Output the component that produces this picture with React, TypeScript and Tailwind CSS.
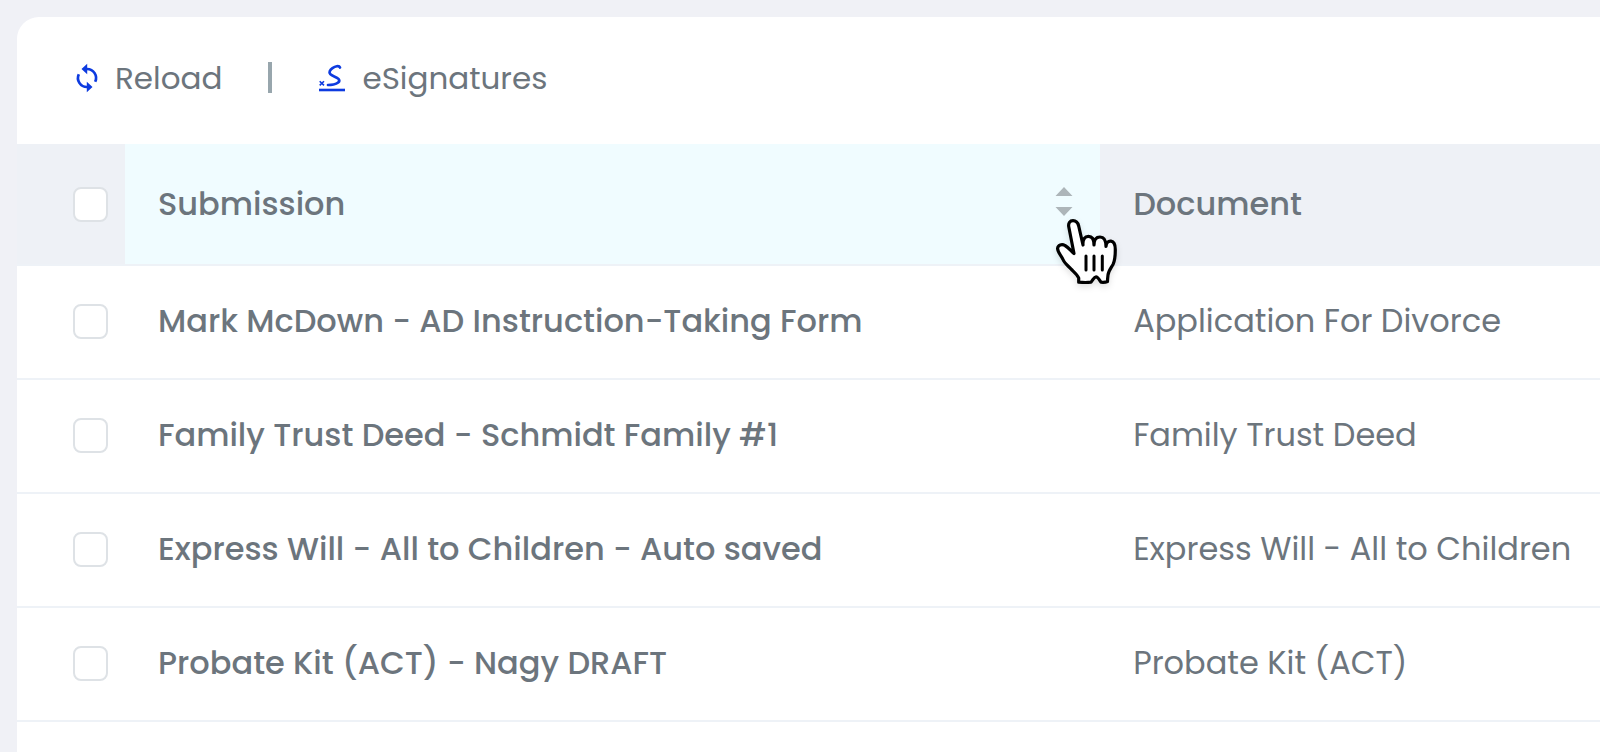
import React, { useState } from 'react';

const submissions = [
  { name: 'Mark McDown - AD Instruction-Taking Form', document: 'Application For Divorce' },
  { name: 'Family Trust Deed - Schmidt Family #1', document: 'Family Trust Deed' },
  { name: 'Express Will - All to Children - Auto saved', document: 'Express Will - All to Children' },
  { name: 'Probate Kit (ACT) - Nagy DRAFT', document: 'Probate Kit (ACT)' },
];

function ReloadIcon() {
  return (
    <svg className="w-6 h-[30px] shrink-0" viewBox="0 0 24 30" fill="none" aria-hidden="true">
      <path d="M12 6A9 9 0 0 1 20.2 18.8M12 24A9 9 0 0 1 3.8 11.2" stroke="currentColor" strokeWidth="2.7" />
      <path d="M6.5 6L12.2 0.8V11.2ZM17.5 24L11.8 18.8V29.2Z" fill="currentColor" />
    </svg>
  );
}

function SignatureIcon() {
  return (
    <svg className="w-7 h-7 shrink-0" viewBox="0 0 28 28" fill="none" stroke="currentColor" aria-hidden="true">
      <path
        d="M22 3.6C21 1 17 2.4 14.5 4.2C11.8 6.1 10.6 8.3 12.3 10.2C14.2 12.3 18.6 12.6 20.6 15C22.8 17.8 19 19.8 15.5 20.5C13.4 20.9 11.6 21 10 21"
        strokeWidth="2.7"
        strokeLinecap="round"
      />
      <path d="M1.7 17.2L6 21.4M6 17.2L1.7 21.4" strokeWidth="1.6" />
      <path d="M1 26H27" strokeWidth="2.6" />
    </svg>
  );
}

function HandPointer() {
  return (
    <svg
      className="absolute right-[-17px] top-[74px] z-10 w-[62px] h-[68px] overflow-visible drop-shadow-md pointer-events-none"
      viewBox="0 0 62 68"
      aria-hidden="true"
    >
      <path
        d="M19 35.5L13.8 9C13 5 15 2.7 18 2.7C21 2.7 22.8 4.5 23.7 8L28 27C27.5 21 30 18.4 33.5 18.4C37.5 18.4 39 21 39 27C39 21.5 41.5 19 45 19C49 19 51 22 51 28.5C51.3 24.5 53.5 22.8 56 23.2C59.5 23.8 60.4 27 60.3 32C60.3 38 60 42.5 58 46.5C56 50 53.5 53 53 57C52.7 59.5 52.5 61.5 52.5 63.5C50.3 64.5 48 64.4 46 64.2C44.5 62 43 58.8 41 58.8C39 58.8 38 62 36 64.2C31.5 64.7 27.5 64.5 23.7 64.2V60C22.5 57 19 54 16.5 51.5C13.5 48 9.5 45.5 8 41.5C6.5 37.5 2.5 34.5 2.6 30.5C2.8 26.8 7 25.6 10 27.5C13.5 29.5 16 33 19 35.5Z"
        fill="#fff"
        stroke="#000"
        strokeWidth="3.2"
        strokeLinejoin="round"
      />
      <path d="M31 38V52M39 38V52M47.3 38V52" stroke="#000" strokeWidth="3" strokeLinecap="round" />
    </svg>
  );
}

const checkboxClass =
  'block ml-auto mr-[17px] size-[35px] appearance-none rounded-lg border-2 border-[#dee2e6] bg-white checked:bg-[#0d3be0] cursor-pointer';

export default function SubmissionsTable() {
  const [selected, setSelected] = useState<number[]>([]);

  const toggle = (index: number) => {
    setSelected(selected.includes(index) ? selected.filter((i) => i !== index) : [...selected, index]);
  };

  return (
    <div className="min-h-screen bg-[#f0f1f6] pl-[17px] pt-[17px] flex overflow-hidden font-['Poppins','Inter',sans-serif] text-[32px] leading-[48px] text-[#6c757d]">
      <div className="flex-1 min-w-0 bg-white rounded-tl-[22px]">
        {/* Toolbar */}
        <div className="h-[127px] pl-[58px] pb-1.5 flex items-center text-[31px]">
          <button className="flex items-center gap-4 cursor-pointer">
            <span className="text-[#0d3be0]"><ReloadIcon /></span>
            Reload
          </button>
          <div className="mx-[46px] w-1 h-[31px] bg-[#98a6ad]" />
          <button className="flex items-center gap-4 cursor-pointer">
            <span className="text-[#0d3be0]"><SignatureIcon /></span>
            eSignatures
          </button>
        </div>

        {/* Submissions */}
        <table className="w-full table-fixed border-separate border-spacing-0 text-left whitespace-nowrap">
          <thead>
            <tr className="h-[122px] bg-[#eef1f6]">
              <th className="w-27 border-b-2 border-[#eef2f7]">
                <input
                  type="checkbox"
                  aria-label="Select all"
                  className={checkboxClass}
                  checked={selected.length === submissions.length}
                  onChange={(e) => setSelected(e.target.checked ? submissions.map((_, i) => i) : [])}
                />
              </th>
              <th className="relative w-[61.6%] pl-[33px] pr-[27px] bg-[#f0fcff] border-b-2 border-[#eef2f7] font-medium">
                <button className="w-full flex items-center justify-between cursor-pointer">
                  Submission
                  <svg className="mb-1 w-[18px] h-[30px]" viewBox="0 0 18 30" fill="#adb5b9" aria-hidden="true">
                    <path d="M9 0L17.5 9H0.5ZM9 29L17.5 20H0.5Z" />
                  </svg>
                </button>
                <HandPointer />
              </th>
              <th className="pl-[33px] border-b-2 border-[#eef2f7] font-medium">Document</th>
            </tr>
          </thead>
          <tbody>
            {submissions.map((row, index) => (
              <tr key={index} className="h-[114px]">
                <td className="pb-0.5 border-b-2 border-[#eef2f7]">
                  <input
                    type="checkbox"
                    aria-label={row.name}
                    className={checkboxClass}
                    checked={selected.includes(index)}
                    onChange={() => toggle(index)}
                  />
                </td>
                <td className="pl-[33px] pb-0.5 border-b-2 border-[#eef2f7] font-medium">{row.name}</td>
                <td className="pl-[33px] pb-0.5 border-b-2 border-[#eef2f7]">{row.document}</td>
              </tr>
            ))}
          </tbody>
        </table>
      </div>
    </div>
  );
}
